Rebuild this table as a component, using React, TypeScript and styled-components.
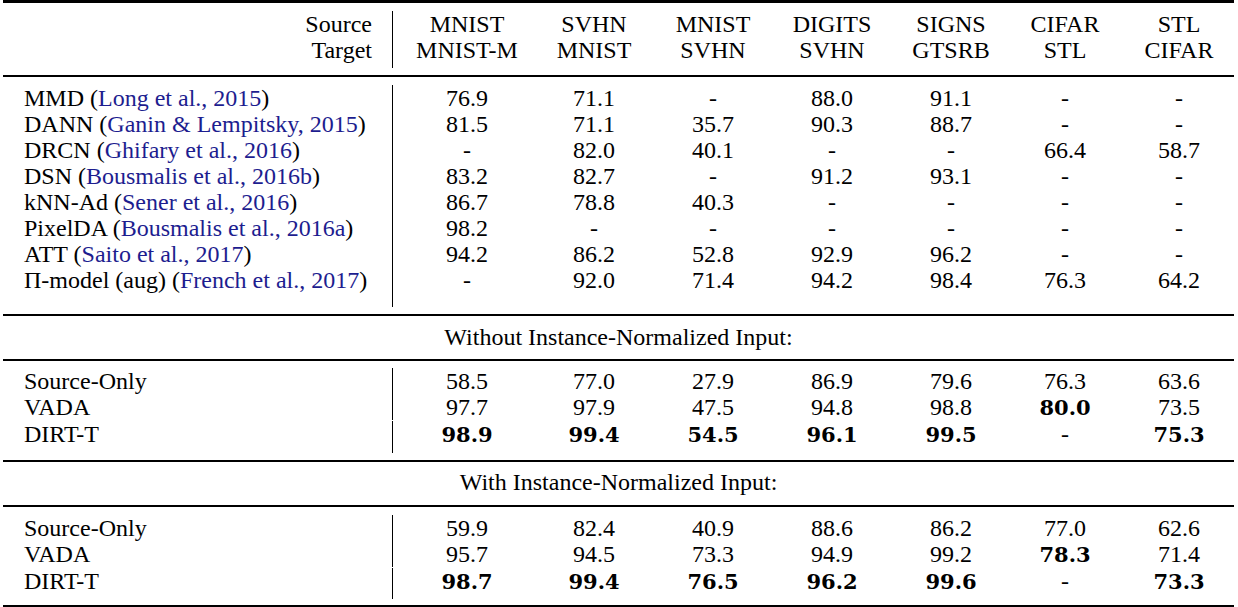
import styled, { createGlobalStyle } from 'styled-components';

const GlobalStyle = createGlobalStyle`
  html, body {
    margin: 0;
    padding: 0;
    background: #fff;
    overflow: hidden;
  }
`;

// label column, then the seven source/target pairs (widths chosen so the
// centres fall where the reference puts them)
const COLUMNS = '390px 148px 106px 132px 106px 132px 96px 132px';

const Table = styled.div`
  width: 1231px;
  margin-left: 3px;
  font-family: 'Liberation Serif', 'Times New Roman', serif;
  font-size: 24px;
  line-height: 26px;
  color: #000;
`;

const Rule = styled.div<{ $weight: number }>`
  height: ${(p) => p.$weight}px;
  background: #000;
`;

const Grid = styled.div<{ $top: number; $bottom: number }>`
  display: grid;
  grid-template-columns: ${COLUMNS};
  align-items: baseline;
  padding: ${(p) => p.$top}px 0 ${(p) => p.$bottom}px;
`;

const LabelCell = styled.div<{ $head?: boolean; $tail?: number }>`
  border-right: 1px solid #000;
  padding-left: 21px;
  padding-right: ${(p) => (p.$head ? 20 : 0)}px;
  padding-bottom: ${(p) => p.$tail ?? 0}px;
  text-align: ${(p) => (p.$head ? 'right' : 'left')};
  white-space: nowrap;
`;

const HeadCell = styled.div`
  display: flex;
  flex-direction: column;
  align-items: center;
  white-space: nowrap;
`;

const NumCell = styled.div<{ $bold?: boolean }>`
  text-align: center;
  white-space: nowrap;
  ${(p) =>
    p.$bold &&
    `
    font-family: 'DejaVu Serif', 'Liberation Serif', serif;
    font-weight: 700;
    font-size: 21px;
  `}
`;

const Cite = styled.span`
  color: #1d1d8f;
`;

const Caption = styled.div<{ $top: number; $bottom: number }>`
  text-align: center;
  padding: ${(p) => p.$top}px 0 ${(p) => p.$bottom}px;
`;

type Row = {
  name: string;
  cite?: string;
  values: string[];
  bold?: number[];
};

const pairs = [
  ['MNIST', 'MNIST-M'],
  ['SVHN', 'MNIST'],
  ['MNIST', 'SVHN'],
  ['DIGITS', 'SVHN'],
  ['SIGNS', 'GTSRB'],
  ['CIFAR', 'STL'],
  ['STL', 'CIFAR'],
];

const baselines: Row[] = [
  { name: 'MMD', cite: 'Long et al., 2015', values: ['76.9', '71.1', '-', '88.0', '91.1', '-', '-'] },
  { name: 'DANN', cite: 'Ganin & Lempitsky, 2015', values: ['81.5', '71.1', '35.7', '90.3', '88.7', '-', '-'] },
  { name: 'DRCN', cite: 'Ghifary et al., 2016', values: ['-', '82.0', '40.1', '-', '-', '66.4', '58.7'] },
  { name: 'DSN', cite: 'Bousmalis et al., 2016b', values: ['83.2', '82.7', '-', '91.2', '93.1', '-', '-'] },
  { name: 'kNN-Ad', cite: 'Sener et al., 2016', values: ['86.7', '78.8', '40.3', '-', '-', '-', '-'] },
  { name: 'PixelDA', cite: 'Bousmalis et al., 2016a', values: ['98.2', '-', '-', '-', '-', '-', '-'] },
  { name: 'ATT', cite: 'Saito et al., 2017', values: ['94.2', '86.2', '52.8', '92.9', '96.2', '-', '-'] },
  { name: 'Π-model (aug)', cite: 'French et al., 2017', values: ['-', '92.0', '71.4', '94.2', '98.4', '76.3', '64.2'] },
];

const withoutNorm: Row[] = [
  { name: 'Source-Only', values: ['58.5', '77.0', '27.9', '86.9', '79.6', '76.3', '63.6'] },
  { name: 'VADA', values: ['97.7', '97.9', '47.5', '94.8', '98.8', '80.0', '73.5'], bold: [5] },
  { name: 'DIRT-T', values: ['98.9', '99.4', '54.5', '96.1', '99.5', '-', '75.3'], bold: [0, 1, 2, 3, 4, 6] },
];

const withNorm: Row[] = [
  { name: 'Source-Only', values: ['59.9', '82.4', '40.9', '88.6', '86.2', '77.0', '62.6'] },
  { name: 'VADA', values: ['95.7', '94.5', '73.3', '94.9', '99.2', '78.3', '71.4'], bold: [5] },
  { name: 'DIRT-T', values: ['98.7', '99.4', '76.5', '96.2', '99.6', '-', '73.3'], bold: [0, 1, 2, 3, 4, 6] },
];

const Section = ({ rows, top, bottom, tail }: { rows: Row[]; top: number; bottom: number; tail: number }) => (
  <Grid $top={top} $bottom={bottom}>
    {rows.map((row, i) => [
      <LabelCell key={`l${i}`} $tail={i === rows.length - 1 ? tail : 0}>
        {row.name}
        {row.cite && (
          <>
            {' ('}
            <Cite>{row.cite}</Cite>
            {')'}
          </>
        )}
      </LabelCell>,
      ...row.values.map((v, j) => (
        <NumCell key={`v${i}-${j}`} $bold={v !== '-' && row.bold?.includes(j)}>
          {v}
        </NumCell>
      )),
    ])}
  </Grid>
);

export default function App() {
  return (
    <>
      <GlobalStyle />
      <Table>
        <Rule $weight={3} />
        <Grid $top={8} $bottom={7}>
          <LabelCell $head $tail={5}>
            Source
            <br />
            Target
          </LabelCell>
          {pairs.map(([src, tgt], i) => (
            <HeadCell key={i}>
              <span>{src}</span>
              <span>{tgt}</span>
            </HeadCell>
          ))}
        </Grid>
        <Rule $weight={2} />
        <Section rows={baselines} top={8} bottom={7} tail={14} />
        <Rule $weight={2} />
        <Caption $top={8} $bottom={9}>Without Instance-Normalized Input:</Caption>
        <Rule $weight={2} />
        <Section rows={withoutNorm} top={7} bottom={7} tail={6} />
        <Rule $weight={2} />
        <Caption $top={7} $bottom={10}>With Instance-Normalized Input:</Caption>
        <Rule $weight={2} />
        <Section rows={withNorm} top={8} bottom={6} tail={5} />
        <Rule $weight={3} />
      </Table>
    </>
  );
}
